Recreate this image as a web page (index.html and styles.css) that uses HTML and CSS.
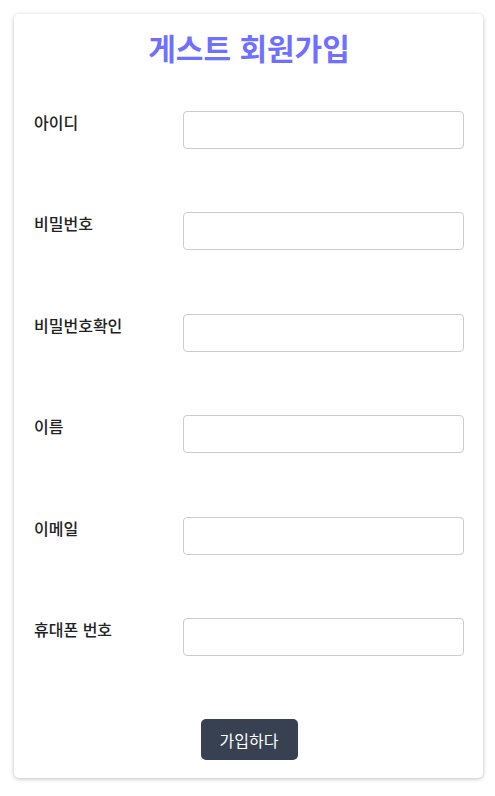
FILE: index.html
```html
<!DOCTYPE html>
<html lang="ko">
<head>
<meta charset="utf-8">
<link rel="stylesheet" href="styles.css">
</head>
<body>
<div class="card">
  <h1 class="title">게스트 회원가입</h1>
  <form class="form">
    <div class="row"><label class="label">아이디</label><input class="input" type="text"></div>
    <div class="row"><label class="label">비밀번호</label><input class="input" type="password"></div>
    <div class="row"><label class="label">비밀번호확인</label><input class="input" type="password"></div>
    <div class="row"><label class="label">이름</label><input class="input" type="text"></div>
    <div class="row"><label class="label">이메일</label><input class="input" type="text"></div>
    <div class="row"><label class="label">휴대폰 번호</label><input class="input" type="text"></div>
    <div class="actions"><button class="btn" type="button">가입하다</button></div>
  </form>
</div>
</body>
</html>
```
FILE: styles.css
```css
html, body { margin: 0; padding: 0; background: #fff; }
body {
  padding: 14px 12px 18px 14px;
  font-family: "Noto Sans CJK KR", "Noto Sans", sans-serif;
  color: #1f1f1f;
}
.card {
  background: #fff;
  border-radius: 5px;
  box-shadow: 0 1px 4px rgba(0,0,0,0.25);
  padding: 14px 19px 19px 20px;
  height: 764px;
  box-sizing: border-box;
}
.title {
  margin: 0;
  text-align: center;
  font-size: 30px;
  line-height: 38px;
  font-weight: 700;
  color: #7070ff;
}
.form {
  display: flex;
  flex-direction: column;
  margin-top: 45px;
}
.row {
  display: flex;
  align-items: flex-start;
  margin-bottom: 63.4px;
}
.label {
  width: 149px;
  flex: none;
  font-size: 16px;
  font-weight: 500;
  line-height: 22px;
  color: #222;
}
.input {
  flex: 1;
  height: 38px;
  box-sizing: border-box;
  border: 1px solid #cccccc;
  border-radius: 4px;
  margin: 0;
  padding: 0 10px;
  font-size: 15px;
  background: #fff;
}
.actions {
  display: flex;
  justify-content: center;
}
.btn {
  width: 97px;
  height: 41px;
  border: none;
  border-radius: 5px;
  background: #374151;
  color: #fff;
  font-family: "Noto Sans CJK KR", "Noto Sans", sans-serif;
  font-size: 16px;
  cursor: pointer;
}
```
